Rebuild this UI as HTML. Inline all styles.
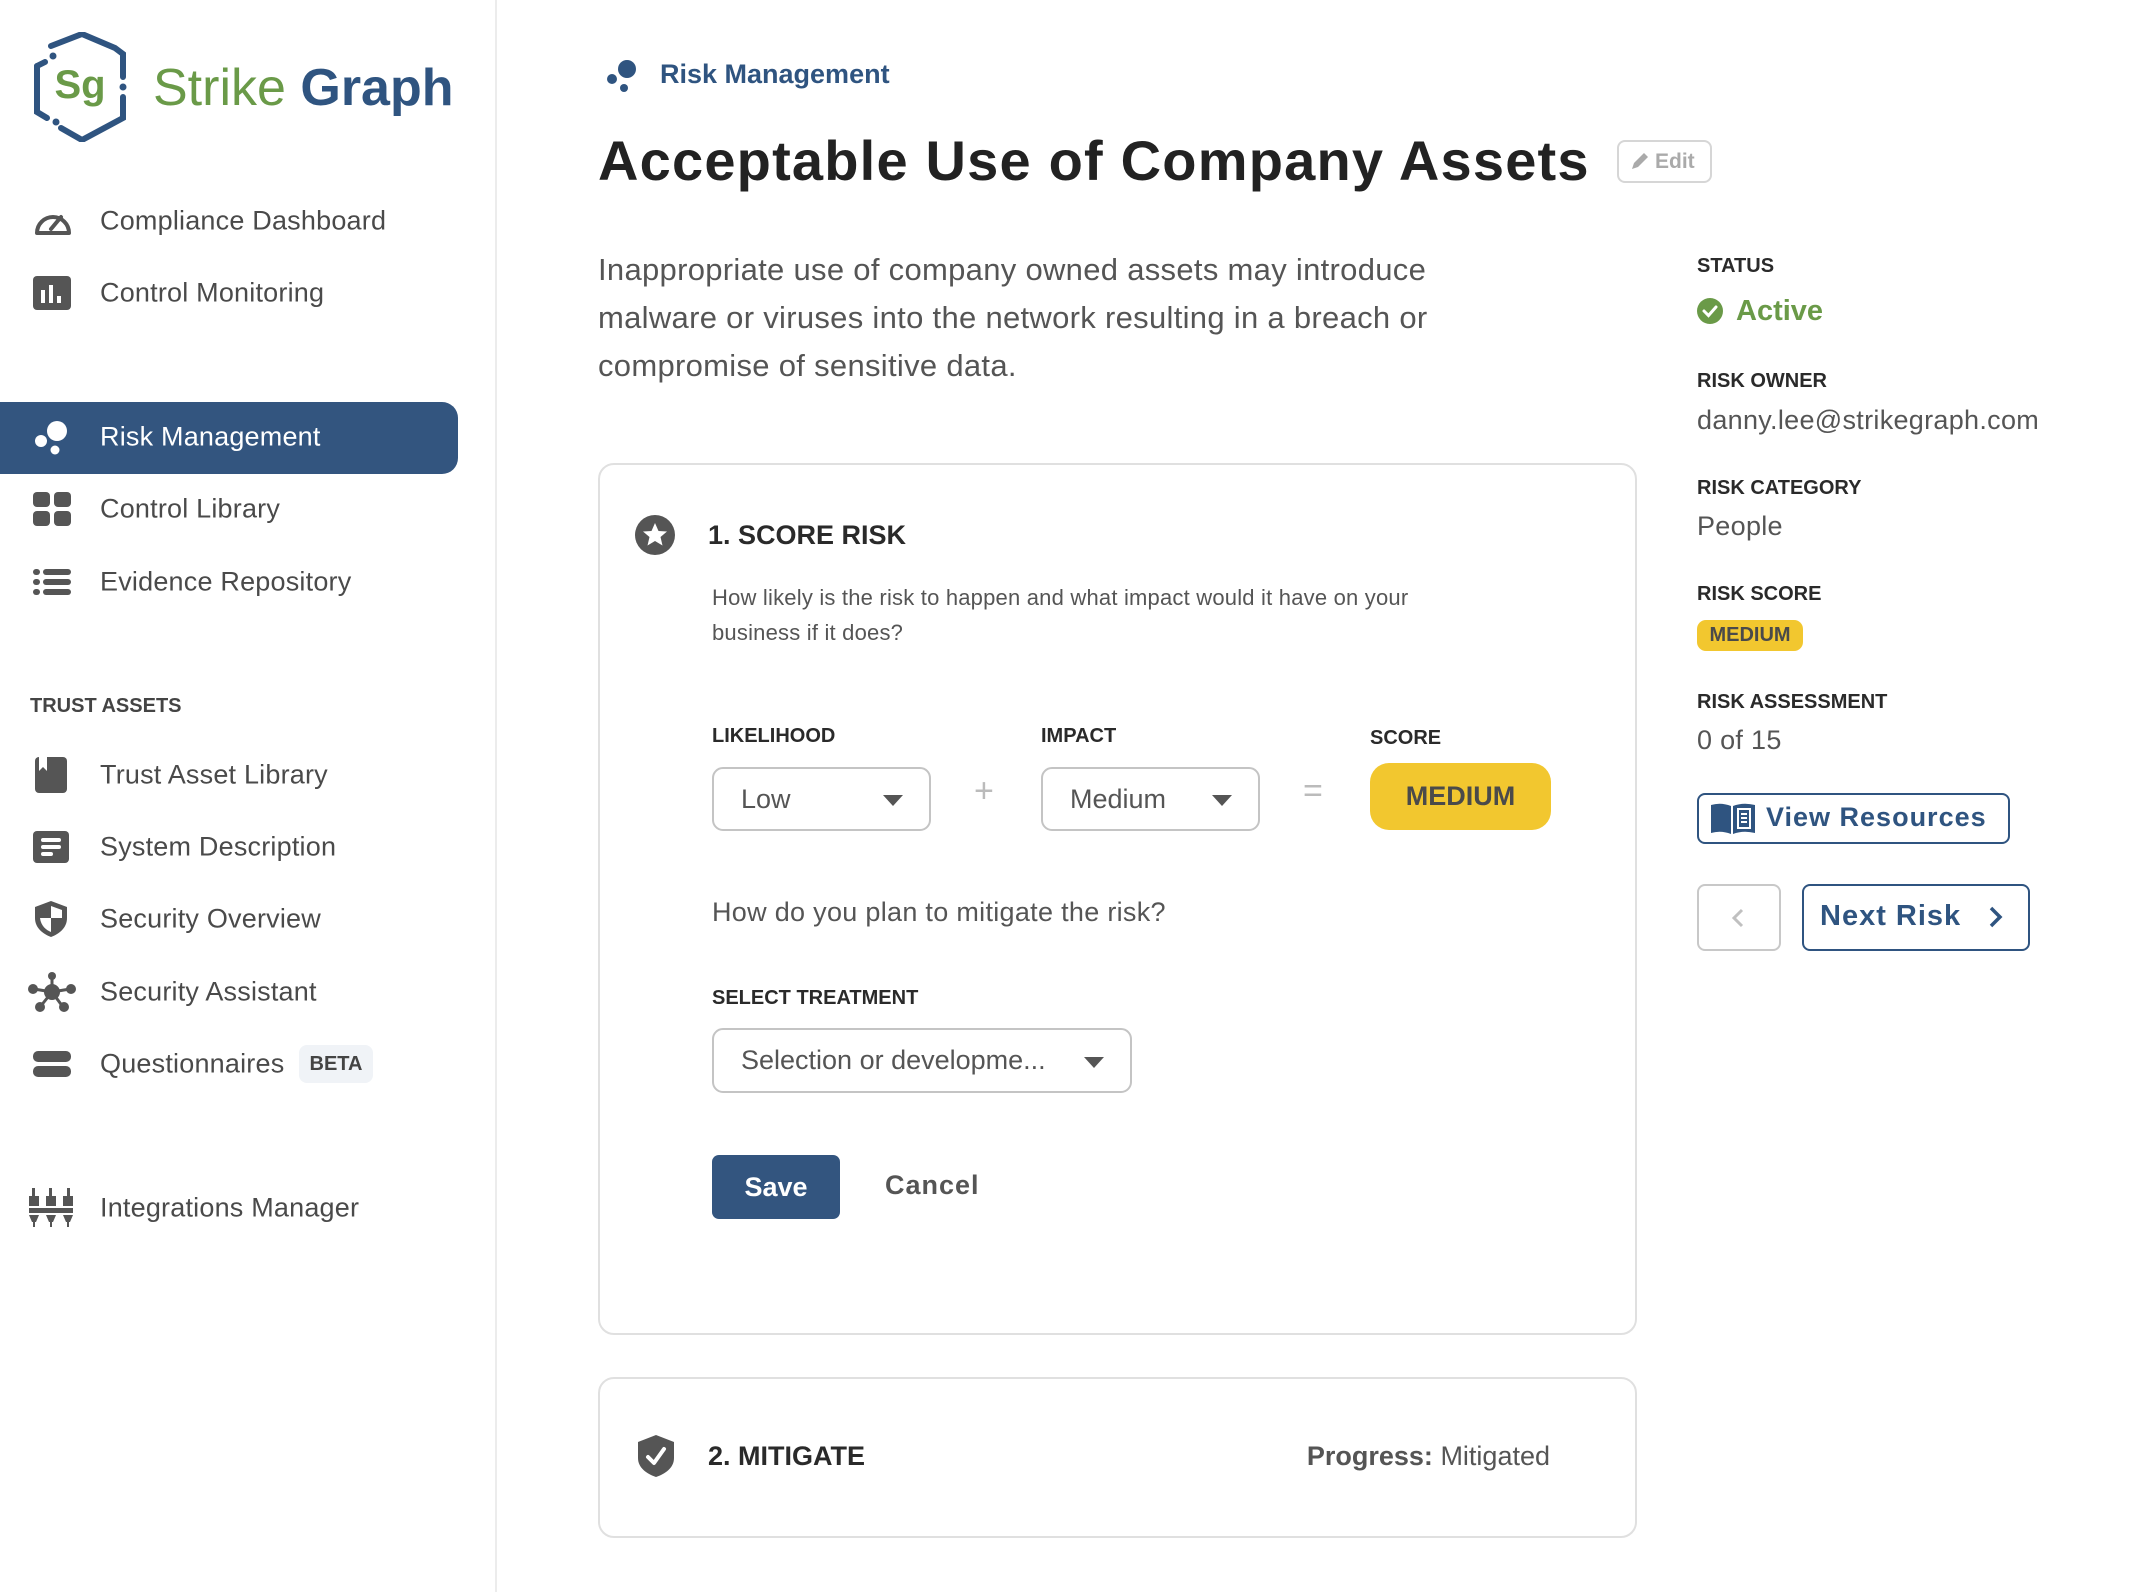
<!DOCTYPE html>
<html><head><meta charset="utf-8"><style>
*{margin:0;padding:0;box-sizing:border-box}
body{width:2136px;height:1592px;background:#fff;font-family:"Liberation Sans",Arial,sans-serif;position:relative;overflow:hidden;color:#555}
.a{position:absolute;white-space:nowrap}
.side{position:absolute;left:0;top:0;width:497px;height:1592px;border-right:2px solid #ececec}
.nav{position:absolute;left:100px;font-size:27px;color:#4a4a4a;transform:translateY(-50%);letter-spacing:0.2px}
.ic{position:absolute;left:33px;transform:translateY(-50%)}
.lbl{position:absolute;font-size:20px;font-weight:bold;color:#2a2a2a;white-space:nowrap}
.val{position:absolute;font-size:27px;color:#555;white-space:nowrap;letter-spacing:0.3px}
.sel{position:absolute;border:2px solid #c4c4c4;border-radius:11px;font-size:27px;color:#555;padding-left:27px;display:flex;align-items:center}
.tri{position:absolute;right:26px;top:50%;margin-top:-4px;border-left:10px solid transparent;border-right:10px solid transparent;border-top:11px solid #555}
.card{position:absolute;left:598px;width:1039px;border:2px solid #e0e0e0;border-radius:16px}
</style></head><body>
<div class="side">
<svg class="a" style="left:31px;top:32px" width="102" height="110" viewBox="0 0 102 110">
<path d="M20 14 L51 2 L84 16 L92 22 L92 45" fill="none" stroke="#2f5480" stroke-width="6" stroke-linecap="round"/>
<path d="M92 65 L92 86 L51 108 L30 96" fill="none" stroke="#2f5480" stroke-width="6" stroke-linecap="round"/>
<path d="M6 34 L6 80 L16 86" fill="none" stroke="#2f5480" stroke-width="6" stroke-linecap="round"/>
<path d="M6 34 L14 30" fill="none" stroke="#2f5480" stroke-width="6" stroke-linecap="round"/>
<circle cx="22" cy="24" r="3.5" fill="#2f5480"/><circle cx="92" cy="55" r="3.5" fill="#2f5480"/><circle cx="25" cy="90" r="3.5" fill="#2f5480"/>
<text x="49" y="66" text-anchor="middle" font-family="Liberation Sans" font-weight="bold" font-size="40" fill="#6a9a48">Sg</text>
</svg>
<div class="a" style="left:153px;top:58px;font-size:52px;line-height:60px"><span style="color:#6a9a48">Strike</span> <b style="color:#2f5480">Graph</b></div>

<svg class="ic" style="top:221px" width="40" height="32" viewBox="0 0 40 32"><path d="M4 28 A16 16 0 1 1 36 28 Z" fill="none" stroke="#555" stroke-width="4" stroke-linejoin="round"/><path d="M18 24 L28 12" stroke="#555" stroke-width="4" stroke-linecap="round"/></svg>
<div class="nav" style="top:221px">Compliance Dashboard</div>
<svg class="ic" style="top:293px" width="38" height="34" viewBox="0 0 38 34"><rect width="38" height="34" rx="4" fill="#555"/><rect x="8" y="14" width="4" height="13" fill="#fff"/><rect x="16" y="9" width="4" height="18" fill="#fff"/><rect x="24" y="20" width="4" height="7" fill="#fff"/></svg>
<div class="nav" style="top:293px">Control Monitoring</div>

<div class="a" style="left:0;top:402px;width:458px;height:72px;background:#33557f;border-radius:0 16px 16px 0"></div>
<svg class="ic" style="top:438px" width="36" height="34" viewBox="0 0 36 34"><circle cx="8" cy="20" r="6" fill="#fff"/><circle cx="24" cy="10" r="10" fill="#fff"/><circle cx="22" cy="29" r="4.5" fill="#fff"/></svg>
<div class="nav" style="top:437px;color:#fff">Risk Management</div>
<svg class="ic" style="top:509px" width="38" height="34" viewBox="0 0 38 34"><rect width="17" height="15" rx="4" fill="#555"/><rect x="21" width="17" height="15" rx="4" fill="#555"/><rect y="19" width="17" height="15" rx="4" fill="#555"/><rect x="21" y="19" width="17" height="15" rx="4" fill="#555"/></svg>
<div class="nav" style="top:509px">Control Library</div>
<svg class="ic" style="top:582px" width="38" height="26" viewBox="0 0 38 26"><rect width="7" height="6" rx="3" fill="#555"/><rect x="10" width="28" height="6" rx="3" fill="#555"/><rect y="10" width="7" height="6" rx="3" fill="#555"/><rect x="10" y="10" width="28" height="6" rx="3" fill="#555"/><rect y="20" width="7" height="6" rx="3" fill="#555"/><rect x="10" y="20" width="28" height="6" rx="3" fill="#555"/></svg>
<div class="nav" style="top:582px">Evidence Repository</div>

<div class="a" style="left:30px;top:695px;font-size:20px;font-weight:bold;color:#444">TRUST ASSETS</div>
<svg class="ic" style="top:775px;left:35px" width="32" height="36" viewBox="0 0 32 36"><rect width="32" height="36" rx="4" fill="#555"/><path d="M4 0 H12 V14 L8 10 L4 14 Z" fill="#fff"/></svg>
<div class="nav" style="top:775px">Trust Asset Library</div>
<svg class="ic" style="top:847px" width="36" height="32" viewBox="0 0 36 32"><rect width="36" height="32" rx="4" fill="#555"/><rect x="8" y="7" width="20" height="4" rx="2" fill="#fff"/><rect x="8" y="14" width="20" height="4" rx="2" fill="#fff"/><rect x="8" y="21" width="12" height="4" rx="2" fill="#fff"/></svg>
<div class="nav" style="top:847px">System Description</div>
<svg class="ic" style="top:919px" width="36" height="38" viewBox="0 0 36 38"><path d="M18 1 L34 7 L34 18 C34 28 26 34 18 37 C10 34 2 28 2 18 L2 7 Z" fill="#555"/><path d="M18 6 L29 10 L29 18 L18 18 Z M18 18 L7 18 C8 26 13 30 18 32 Z" fill="#fff"/></svg>
<div class="nav" style="top:919px">Security Overview</div>
<svg class="ic" style="top:992px;left:28px" width="48" height="40" viewBox="0 0 48 40"><g stroke="#555" stroke-width="3"><line x1="24" y1="20" x2="24" y2="4"/><line x1="24" y1="20" x2="6" y2="17"/><line x1="24" y1="20" x2="42" y2="17"/><line x1="24" y1="20" x2="12" y2="35"/><line x1="24" y1="20" x2="35" y2="35"/></g><circle cx="24" cy="20" r="8" fill="#555"/><circle cx="24" cy="4" r="4" fill="#555"/><circle cx="5" cy="17" r="5" fill="#555"/><circle cx="43" cy="17" r="5" fill="#555"/><circle cx="12" cy="35" r="5" fill="#555"/><circle cx="36" cy="35" r="5" fill="#555"/></svg>
<div class="nav" style="top:992px">Security Assistant</div>
<svg class="ic" style="top:1064px" width="38" height="26" viewBox="0 0 38 26"><rect width="38" height="11" rx="5" fill="#555"/><rect y="15" width="38" height="11" rx="5" fill="#555"/></svg>
<div class="nav" style="top:1064px">Questionnaires</div>
<div class="a" style="left:299px;top:1045px;width:74px;height:38px;background:#f0f3f7;border-radius:8px;font-size:20px;font-weight:bold;color:#444;text-align:center;line-height:38px">BETA</div>
<svg class="ic" style="top:1208px;left:29px" width="46" height="40" viewBox="0 0 46 40"><g fill="#555"><rect x="3" y="0" width="3" height="8"/><rect x="20" y="0" width="3" height="8"/><rect x="38" y="0" width="3" height="8"/><rect x="0" y="8" width="10" height="10"/><rect x="17" y="8" width="10" height="10"/><rect x="34" y="8" width="10" height="10"/><rect x="0" y="20" width="44" height="5"/><path d="M0 27 H10 L7 34 H3 Z M17 27 H27 L24 34 H20 Z M34 27 H44 L41 34 H37 Z"/><rect x="4" y="34" width="2" height="5"/><rect x="21" y="34" width="2" height="5"/><rect x="38" y="34" width="2" height="5"/></g></svg>
<div class="nav" style="top:1208px">Integrations Manager</div>
</div>

<svg class="a" style="left:606px;top:59px" width="32" height="34" viewBox="0 0 32 34"><circle cx="6" cy="20" r="5" fill="#2f5480"/><circle cx="21" cy="10" r="9" fill="#2f5480"/><circle cx="18" cy="29" r="4" fill="#2f5480"/></svg>
<div class="a" style="left:660px;top:59px;font-size:27px;color:#2f5480;font-weight:bold">Risk Management</div>
<div class="a" style="left:598px;top:128px;font-size:56px;font-weight:bold;color:#222;letter-spacing:1.2px">Acceptable Use of Company Assets</div>
<div class="a" style="left:1617px;top:140px;width:95px;height:43px;border:2px solid #d6d6d6;border-radius:8px;font-size:21px;color:#aaa;line-height:39px;padding-left:36px;font-weight:bold">Edit</div>
<svg class="a" style="left:1630px;top:151px" width="20" height="20" viewBox="0 0 20 20"><path d="M2 18 L4 12 L14 2 L18 6 L8 16 Z" fill="#aaa"/></svg>
<div class="a" style="left:598px;top:246px;font-size:31px;line-height:48px;color:#555;white-space:normal;width:900px;letter-spacing:0.3px">Inappropriate use of company owned assets may introduce malware or viruses into the network resulting in a breach or compromise of sensitive data.</div>

<div class="card" style="top:463px;height:872px"></div>
<svg class="a" style="left:635px;top:515px" width="40" height="40" viewBox="0 0 40 40"><circle cx="20" cy="20" r="20" fill="#555"/><path d="M20 8 L23.5 16 L32 16.5 L25.5 22 L27.5 30.5 L20 26 L12.5 30.5 L14.5 22 L8 16.5 L16.5 16 Z" fill="#fff"/></svg>
<div class="a" style="left:708px;top:520px;font-size:27px;font-weight:bold;color:#2a2a2a">1. SCORE RISK</div>
<div class="a" style="left:712px;top:580px;font-size:22px;line-height:35px;color:#555;white-space:normal;width:760px;letter-spacing:0.2px">How likely is the risk to happen and what impact would it have on your business if it does?</div>
<div class="lbl" style="left:712px;top:725px">LIKELIHOOD</div>
<div class="lbl" style="left:1041px;top:725px">IMPACT</div>
<div class="lbl" style="left:1370px;top:727px">SCORE</div>
<div class="sel" style="left:712px;top:767px;width:219px;height:64px">Low<div class="tri"></div></div>
<div class="a" style="left:974px;top:772px;font-size:34px;color:#bbb">+</div>
<div class="sel" style="left:1041px;top:767px;width:219px;height:64px">Medium<div class="tri"></div></div>
<div class="a" style="left:1303px;top:772px;font-size:34px;color:#bbb">=</div>
<div class="a" style="left:1370px;top:763px;width:181px;height:67px;background:#f2c72f;border-radius:19px;font-size:27px;font-weight:bold;color:#4a4a4a;text-align:center;line-height:67px">MEDIUM</div>
<div class="a" style="left:712px;top:897px;font-size:27px;color:#555;letter-spacing:0.3px">How do you plan to mitigate the risk?</div>
<div class="lbl" style="left:712px;top:987px">SELECT TREATMENT</div>
<div class="sel" style="left:712px;top:1028px;width:420px;height:65px">Selection or developme...<div class="tri"></div></div>
<div class="a" style="left:712px;top:1155px;width:128px;height:64px;background:#33557f;border-radius:7px;color:#fff;font-size:27px;font-weight:bold;text-align:center;line-height:64px">Save</div>
<div class="a" style="left:885px;top:1170px;font-size:27px;font-weight:bold;color:#555;letter-spacing:1px">Cancel</div>

<div class="card" style="top:1377px;height:161px"></div>
<svg class="a" style="left:637px;top:1434px" width="38" height="44" viewBox="0 0 38 44"><path d="M19 1 L37 8 L37 24 C37 34 28 40 19 43 C10 40 1 34 1 24 L1 8 Z" fill="#555"/><path d="M11 23 L17 29 L27 15" fill="none" stroke="#fff" stroke-width="4" stroke-linecap="round" stroke-linejoin="round"/></svg>
<div class="a" style="left:708px;top:1441px;font-size:27px;font-weight:bold;color:#2a2a2a">2. MITIGATE</div>
<div class="a" style="right:586px;top:1441px;font-size:27px;color:#555"><b>Progress:</b> Mitigated</div>

<div class="lbl" style="left:1697px;top:255px">STATUS</div>
<svg class="a" style="left:1697px;top:298px" width="26" height="26" viewBox="0 0 26 26"><circle cx="13" cy="13" r="13" fill="#6a9a48"/><path d="M7 13 L11.5 17.5 L19 9" fill="none" stroke="#fff" stroke-width="3" stroke-linecap="round"/></svg>
<div class="a" style="left:1736px;top:295px;font-size:29px;font-weight:bold;color:#6a9a48">Active</div>
<div class="lbl" style="left:1697px;top:370px">RISK OWNER</div>
<div class="val" style="left:1697px;top:405px">danny.lee@strikegraph.com</div>
<div class="lbl" style="left:1697px;top:477px">RISK CATEGORY</div>
<div class="val" style="left:1697px;top:511px">People</div>
<div class="lbl" style="left:1697px;top:583px">RISK SCORE</div>
<div class="a" style="left:1697px;top:620px;width:106px;height:31px;background:#f2c72f;border-radius:9px;font-size:20px;font-weight:bold;color:#4a4a4a;text-align:center;line-height:31px">MEDIUM</div>
<div class="lbl" style="left:1697px;top:691px">RISK ASSESSMENT</div>
<div class="val" style="left:1697px;top:725px">0 of 15</div>
<div class="a" style="left:1697px;top:793px;width:313px;height:51px;border:2px solid #2f5480;border-radius:8px"></div>
<svg class="a" style="left:1711px;top:802px" width="44" height="32" viewBox="0 0 44 32"><path d="M0 3 Q10 0 20 4 L20 32 Q10 28 0 31 Z" fill="#2f5480"/><path d="M22 4 Q32 0 44 3 L44 31 Q32 28 22 32 Z" fill="#2f5480"/><g stroke="#fff" stroke-width="2"><rect x="27" y="7" width="12" height="19" fill="none"/><line x1="30" y1="12" x2="36" y2="12"/><line x1="30" y1="16" x2="36" y2="16"/><line x1="30" y1="20" x2="36" y2="20"/></g></svg>
<div class="a" style="left:1766px;top:802px;font-size:27px;font-weight:bold;color:#2f5480;letter-spacing:1px">View Resources</div>
<div class="a" style="left:1697px;top:884px;width:84px;height:67px;border:2px solid #c8c8c8;border-radius:8px"></div>
<svg class="a" style="left:1731px;top:908px" width="14" height="20" viewBox="0 0 14 20"><path d="M11 2 L3 10 L11 18" fill="none" stroke="#c0c0c0" stroke-width="3"/></svg>
<div class="a" style="left:1802px;top:884px;width:228px;height:67px;border:2px solid #2f5480;border-radius:8px"></div>
<div class="a" style="left:1820px;top:900px;font-size:29px;font-weight:bold;color:#2f5480;letter-spacing:1px">Next Risk</div>
<svg class="a" style="left:1988px;top:906px" width="16" height="22" viewBox="0 0 16 22"><path d="M3 2 L12 11 L3 20" fill="none" stroke="#2f5480" stroke-width="3.5"/></svg>
</body></html>
